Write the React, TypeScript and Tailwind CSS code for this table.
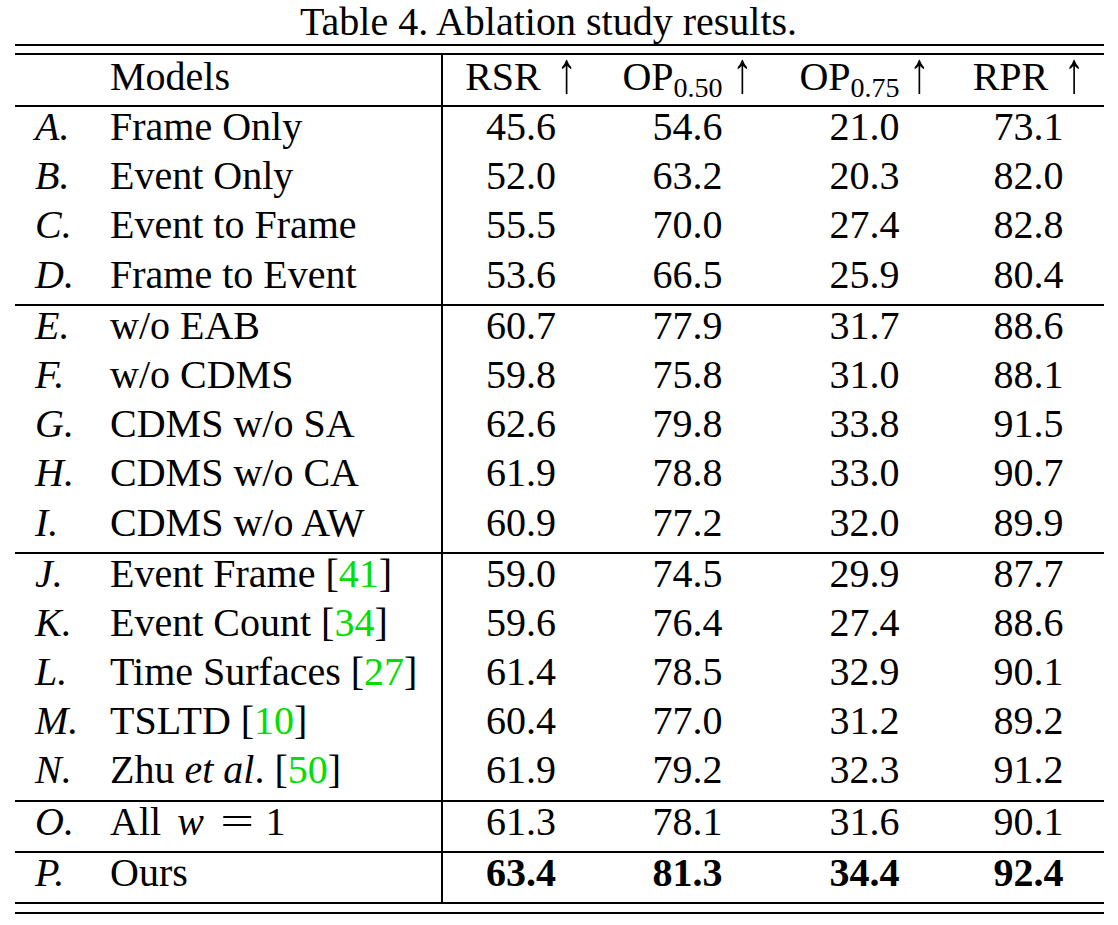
import React from "react";

type Row = {
  l: string;
  name: React.ReactNode;
  v: [string, string, string, string];
  bold?: boolean;
};

const G = ({ children }: { children: React.ReactNode }) => (
  <span className="text-[#00e000]">{children}</span>
);

const Cite = ({ n }: { n: string }) => (
  <>
    [<G>{n}</G>]
  </>
);

const groups: Row[][] = [
  [
    { l: "A", name: "Frame Only", v: ["45.6", "54.6", "21.0", "73.1"] },
    { l: "B", name: "Event Only", v: ["52.0", "63.2", "20.3", "82.0"] },
    { l: "C", name: "Event to Frame", v: ["55.5", "70.0", "27.4", "82.8"] },
    { l: "D", name: "Frame to Event", v: ["53.6", "66.5", "25.9", "80.4"] },
  ],
  [
    { l: "E", name: "w/o EAB", v: ["60.7", "77.9", "31.7", "88.6"] },
    { l: "F", name: "w/o CDMS", v: ["59.8", "75.8", "31.0", "88.1"] },
    { l: "G", name: "CDMS w/o SA", v: ["62.6", "79.8", "33.8", "91.5"] },
    { l: "H", name: "CDMS w/o CA", v: ["61.9", "78.8", "33.0", "90.7"] },
    { l: "I", name: "CDMS w/o AW", v: ["60.9", "77.2", "32.0", "89.9"] },
  ],
  [
    { l: "J", name: <>Event Frame <Cite n="41" /></>, v: ["59.0", "74.5", "29.9", "87.7"] },
    { l: "K", name: <>Event Count <Cite n="34" /></>, v: ["59.6", "76.4", "27.4", "88.6"] },
    { l: "L", name: <>Time Surfaces <Cite n="27" /></>, v: ["61.4", "78.5", "32.9", "90.1"] },
    { l: "M", name: <>TSLTD <Cite n="10" /></>, v: ["60.4", "77.0", "31.2", "89.2"] },
    {
      l: "N",
      name: (
        <>
          Zhu <span className="italic">et al</span>. <Cite n="50" />
        </>
      ),
      v: ["61.9", "79.2", "32.3", "91.2"],
    },
  ],
  [
    {
      l: "O",
      name: (
        <>
          All<span className="italic ml-[16px]">w</span>
          <span className="inline-block scale-x-150 ml-[22px]">=</span>
          <span className="ml-[17px]">1</span>
        </>
      ),
      v: ["61.3", "78.1", "31.6", "90.1"],
    },
  ],
  [{ l: "P", name: "Ours", v: ["63.4", "81.3", "34.4", "92.4"], bold: true }],
];

const gridCols = "grid grid-cols-[81px_347px_156px_177px_177px_151px]";

const Rule = () => <div className="h-[2px] bg-black" />;

const Sub = ({ children }: { children: React.ReactNode }) => (
  <span className="text-[28px] align-[-7px] leading-none">{children}</span>
);

const Up = ({ ml }: { ml: string }) => (
  <span className={`inline-block scale-y-[1.45] origin-[50%_70%] ${ml}`}>↑</span>
);

function DataRow({ r }: { r: Row }) {
  return (
    <div className={`${gridCols} h-[49.2px] leading-[40px]`}>
      <div className="pl-[20px] italic">{r.l}.</div>
      <div className="pl-[14px] border-r-2 border-black whitespace-nowrap">{r.name}</div>
      {r.v.map((x, i) => (
        <div key={i} className={`text-center ${r.bold ? "font-bold" : ""}`}>
          {x}
        </div>
      ))}
    </div>
  );
}

export default function App() {
  return (
    <div className="w-[1118px] h-[925px] bg-white text-black text-[40px] overflow-hidden font-['Liberation_Serif','Times_New_Roman',serif]">
      <div className="ml-[15px] w-[1089px] pt-[1px]">
        <div className="text-center leading-[41px] pr-[22px] whitespace-nowrap">
          Table 4. Ablation study results.
        </div>
        <div className="mt-[2px]">
          <Rule />
        </div>
        <div className="mt-[7px]">
          <Rule />
        </div>
        <div className={`${gridCols} h-[50px] leading-[40px] pt-[2px]`}>
          <div />
          <div className="pl-[14px] border-r-2 border-black -mt-[2px] pt-[2px]">Models</div>
          <div className="text-center whitespace-nowrap">
            RSR<Up ml="ml-[16px]" />
          </div>
          <div className="text-center whitespace-nowrap">
            OP<Sub>0.50</Sub>
            <Up ml="ml-[10px]" />
          </div>
          <div className="text-center whitespace-nowrap">
            OP<Sub>0.75</Sub>
            <Up ml="ml-[10px]" />
          </div>
          <div className="text-center whitespace-nowrap">
            RPR<Up ml="ml-[16px]" />
          </div>
        </div>
        <Rule />
        {groups.map((g, gi) => (
          <React.Fragment key={gi}>
            {g.map((r) => (
              <DataRow key={r.l} r={r} />
            ))}
            <Rule />
          </React.Fragment>
        ))}
        <div className="mt-[8px]">
          <Rule />
        </div>
      </div>
    </div>
  );
}
